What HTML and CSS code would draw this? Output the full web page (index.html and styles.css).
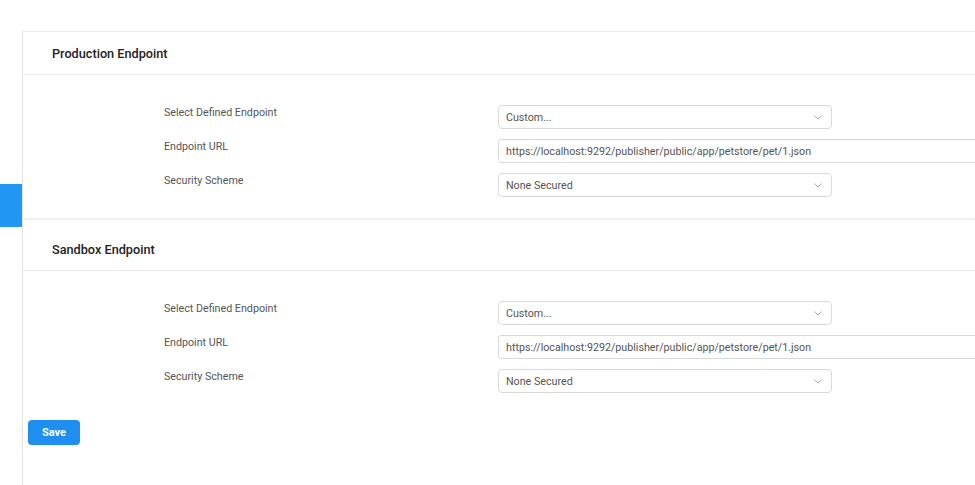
FILE: index.html
```html
<!DOCTYPE html>
<html>
<head>
<meta charset="utf-8">
<link rel="stylesheet" href="styles.css">
</head>
<body>
<div class="page">
  <div class="sidebar"><div class="active-tab"></div></div>
  <div class="main">
    <section class="card card-first">
      <div class="card-header">Production Endpoint</div>
      <div class="card-body">
        <div class="label">Select Defined Endpoint</div>
        <div class="select"><span>Custom...</span><svg class="chev" width="8" height="5" viewBox="0 0 8 5"><polyline points="0.5,0.5 4,4 7.5,0.5" fill="none" stroke="#aaa" stroke-width="1"/></svg></div>
        <div class="label">Endpoint URL</div>
        <div class="input">https://localhost:9292/publisher/public/app/petstore/pet/1.json</div>
        <div class="label">Security Scheme</div>
        <div class="select"><span>None Secured</span><svg class="chev" width="8" height="5" viewBox="0 0 8 5"><polyline points="0.5,0.5 4,4 7.5,0.5" fill="none" stroke="#aaa" stroke-width="1"/></svg></div>
      </div>
    </section>
    <section class="card card-second">
      <div class="card-header">Sandbox Endpoint</div>
      <div class="card-body">
        <div class="label">Select Defined Endpoint</div>
        <div class="select"><span>Custom...</span><svg class="chev" width="8" height="5" viewBox="0 0 8 5"><polyline points="0.5,0.5 4,4 7.5,0.5" fill="none" stroke="#aaa" stroke-width="1"/></svg></div>
        <div class="label">Endpoint URL</div>
        <div class="input">https://localhost:9292/publisher/public/app/petstore/pet/1.json</div>
        <div class="label">Security Scheme</div>
        <div class="select"><span>None Secured</span><svg class="chev" width="8" height="5" viewBox="0 0 8 5"><polyline points="0.5,0.5 4,4 7.5,0.5" fill="none" stroke="#aaa" stroke-width="1"/></svg></div>
      </div>
    </section>
    <div class="actions"><button class="btn-save">Save</button></div>
  </div>
</div>
</body>
</html>
```

FILE: styles.css
```css
html, body {
  margin: 0;
  padding: 0;
  background: #fff;
  overflow: hidden;
}
body {
  font-family: Roboto, "Liberation Sans", sans-serif;
  color: #555;
  width: 975px;
  height: 485px;
}
.page {
  display: flex;
  height: 485px;
}
.sidebar {
  width: 22px;
  flex: none;
}
.active-tab {
  margin-top: 184px;
  height: 43px;
  background: #2196f3;
}
.main {
  margin-top: 31px;
  flex: 1;
  min-width: 0;
  overflow: hidden;
  border-left: 1px solid #e3e3e3;
  border-top: 1px solid #ececec;
}
.card {
  background: #fff;
}
.card-first {
  box-shadow: 0 1px 3px rgba(0, 0, 0, 0.12);
}
.card-second {
  margin-top: 10px;
}
.card-header {
  padding: 12px 0 10px 29px;
  line-height: 20px;
  font-size: 12.7px;
  font-weight: 500;
  color: #222;
  border-bottom: 1px solid #e8e8e8;
}
.card-body {
  display: grid;
  grid-template-columns: 334px 600px;
  row-gap: 10px;
  padding: 30px 0 21px 141px;
}
.label {
  font-size: 10.7px;
  line-height: 16px;
  color: #555;
}
.select, .input {
  box-sizing: border-box;
  height: 24px;
  border: 1px solid #d9d9d9;
  font-size: 10.7px;
  color: #555;
  display: flex;
  align-items: center;
  padding: 0 7px;
}
.select {
  width: 334px;
  border-radius: 4px;
  justify-content: space-between;
  padding-right: 9px;
}
.input {
  width: 600px;
  border-radius: 3px;
}
.chev {
  display: block;
}
.actions {
  padding: 6px 0 0 5px;
}
.btn-save {
  width: 52px;
  height: 25px;
  border: none;
  border-radius: 4px;
  background: #1e8ff0;
  color: #fff;
  font-family: Roboto, "Liberation Sans", sans-serif;
  font-size: 11px;
  font-weight: 700;
  padding: 0;
}
```
